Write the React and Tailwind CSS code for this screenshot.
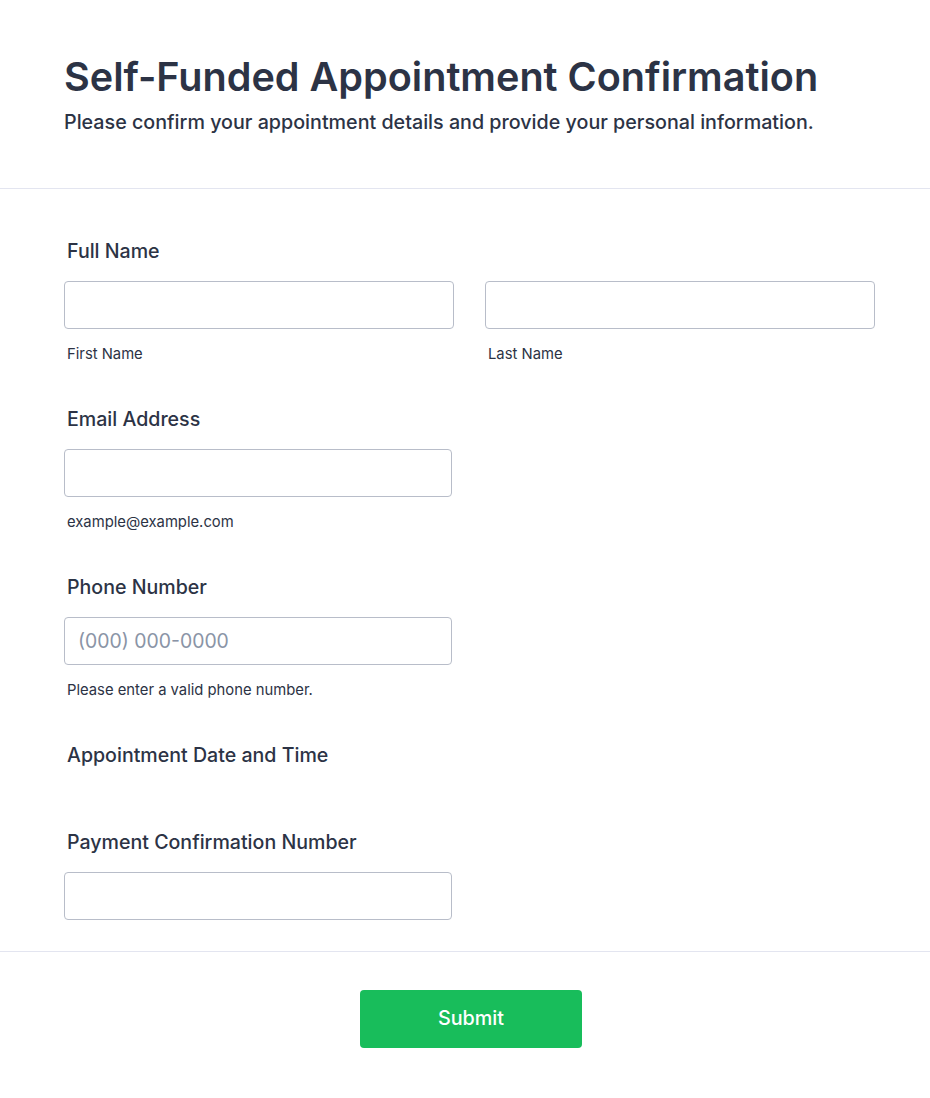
function Field({ label, children, className = "" }) {
    return (
        <div className={className}>
            <label className="block pl-[3px] text-[19.6px] leading-[27px] font-medium text-[#2c3345]">
                {label}
            </label>
            {children}
        </div>
    );
}

function TextInput({ placeholder, className = "" }) {
    return (
        <input
            type="text"
            placeholder={placeholder}
            className={`block h-12 w-full rounded-[4px] border border-[#b8bdc9] bg-white px-[13px] text-[19.4px] text-[#2c3345] placeholder:text-[#8a94a6] outline-none ${className}`}
        />
    );
}

function SubLabel({ children }) {
    return (
        <p className="mt-[15px] pl-[3px] text-[14.8px] leading-5 text-[#2c3345]">
            {children}
        </p>
    );
}

export default function App() {
    return (
        <div
            className="min-h-screen bg-white"
            style={{ fontFamily: "Inter, 'Noto Sans', sans-serif" }}
        >
            <header className="border-b border-[#e3e5f0] px-16 pt-[54px] h-[189px]">
                <h1 className="text-[39.6px] leading-[46px] font-semibold text-[#2c3345]">
                    Self-Funded Appointment Confirmation
                </h1>
                <p className="mt-[10px] text-[19.7px] leading-6 font-medium text-[#2c3345]">
                    Please confirm your appointment details and provide your personal information.
                </p>
            </header>

            <main className="px-16 pt-[49px] pb-[31px] border-b border-[#e3e5f0]">
                <Field label="Full Name">
                    <div className="mt-4 grid grid-cols-2 gap-[31px] w-[811px]">
                        <div>
                            <TextInput />
                            <SubLabel>First Name</SubLabel>
                        </div>
                        <div>
                            <TextInput />
                            <SubLabel>Last Name</SubLabel>
                        </div>
                    </div>
                </Field>

                <Field label="Email Address" className="mt-[42px]">
                    <div className="mt-4 w-[388px]">
                        <TextInput />
                        <SubLabel>example@example.com</SubLabel>
                    </div>
                </Field>

                <Field label="Phone Number" className="mt-[42px]">
                    <div className="mt-4 w-[388px]">
                        <TextInput placeholder="(000) 000-0000" />
                        <SubLabel>Please enter a valid phone number.</SubLabel>
                    </div>
                </Field>

                <Field label="Appointment Date and Time" className="mt-[42px]">
                    <div className="h-[60px]" />
                </Field>

                <Field label="Payment Confirmation Number">
                    <div className="mt-4 w-[388px]">
                        <TextInput />
                    </div>
                </Field>
            </main>

            <footer className="flex justify-center pl-3 pt-[38px] pb-[50px]">
                <button
                    type="button"
                    className="h-[58px] w-[222px] rounded-[4px] bg-[#18bd5b] text-[19.8px] font-medium text-white"
                >
                    Submit
                </button>
            </footer>
        </div>
    );
}
